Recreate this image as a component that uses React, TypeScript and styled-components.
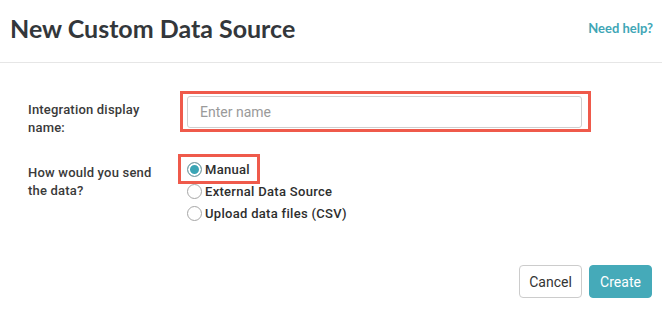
import React, { useState } from "react";
import styled, { createGlobalStyle } from "styled-components";

const GlobalStyle = createGlobalStyle`
  html, body {
    margin: 0;
    padding: 0;
    background: #ffffff;
  }
  * {
    box-sizing: border-box;
  }
`;

const Page = styled.div`
  width: 662px;
  height: 310px;
  background: #fff;
  font-family: Roboto, "Liberation Sans", sans-serif;
`;

const Header = styled.header`
  display: flex;
  align-items: center;
  justify-content: space-between;
  height: 63px;
  padding: 0 9px 6px 10px;
  border-bottom: 1px solid #e6e6e6;
`;

const Title = styled.h1`
  margin: 0;
  font-family: Lato, "Liberation Sans", sans-serif;
  font-weight: 700;
  font-size: 25px;
  color: #33373b;
`;

const HelpLink = styled.a`
  font-family: Lato, "Liberation Sans", sans-serif;
  font-weight: 700;
  font-size: 13px;
  color: #3fa6b6;
  text-decoration: none;
`;

const Body = styled.div`
  padding: 28px 0 0 28px;
`;

const FormRow = styled.div<{ $gap?: number }>`
  display: flex;
  align-items: flex-start;
  margin-bottom: ${(p) => p.$gap ?? 0}px;
`;

const Label = styled.label<{ $offset: number }>`
  width: 152px;
  flex-shrink: 0;
  margin-top: ${(p) => p.$offset}px;
  font-size: 13px;
  font-weight: 500;
  line-height: 18px;
  letter-spacing: 0.2px;
  color: #3a3a3a;
`;

const Highlight = styled.div`
  width: 411px;
  border: 3px solid #ef5a4b;
  padding: 2px 6px 1px 4px;
`;

const TextInput = styled.input`
  display: block;
  width: 100%;
  height: 32px;
  padding: 0 12px;
  border: 1px solid #cfcfcf;
  border-radius: 3px;
  font-family: Roboto, "Liberation Sans", sans-serif;
  font-size: 14px;
  color: #333;
  outline: none;

  &::placeholder {
    color: #9a9a9a;
  }
`;

const OptionList = styled.div`
  display: flex;
  flex-direction: column;
  align-items: flex-start;
  padding-left: 2px;
`;

const Option = styled.label<{ $marked?: boolean }>`
  display: inline-flex;
  align-items: center;
  gap: 3px;
  height: 22px;
  padding: 0 6px 0 5px;
  cursor: pointer;
  font-size: 13px;
  font-weight: 500;
  letter-spacing: 0.3px;
  color: #2e2e2e;
  outline: ${(p) => (p.$marked ? "3px solid #ef5a4b" : "none")};
  outline-offset: ${(p) => (p.$marked ? "1px" : "0")};
`;

const RadioDot = styled.span<{ $checked: boolean }>`
  width: 15px;
  height: 15px;
  border-radius: 50%;
  border: 1px solid ${(p) => (p.$checked ? "#8a9ea2" : "#a6a6a6")};
  background: ${(p) => (p.$checked ? "#3aa5b5" : "#fff")};
  box-shadow: inset 0 0 0 ${(p) => (p.$checked ? "2px" : "0")} #fff;
  flex-shrink: 0;
`;

const Footer = styled.div`
  display: flex;
  justify-content: flex-end;
  gap: 7px;
  padding: 41px 10px 0 0;
`;

const Button = styled.button<{ $primary?: boolean }>`
  width: 63px;
  height: 33px;
  padding: 0;
  border-radius: 4px;
  font-family: Roboto, "Liberation Sans", sans-serif;
  font-size: 14px;
  cursor: pointer;
  border: 1px solid ${(p) => (p.$primary ? "#45aab9" : "#cccccc")};
  background: ${(p) => (p.$primary ? "#45aab9" : "#fff")};
  color: ${(p) => (p.$primary ? "#fff" : "#333")};
`;

const options = ["Manual", "External Data Source", "Upload data files (CSV)"];

export default function App() {
  const [method, setMethod] = useState("Manual");

  return (
    <Page>
      <GlobalStyle />
      <Header>
        <Title>New Custom Data Source</Title>
        <HelpLink href="#">Need help?</HelpLink>
      </Header>
      <Body>
        <FormRow $gap={21}>
          <Label $offset={10}>
            Integration display
            <br />
            name:
          </Label>
          <Highlight>
            <TextInput placeholder="Enter name" />
          </Highlight>
        </FormRow>
        <FormRow>
          <Label $offset={6}>
            How would you send
            <br />
            the data?
          </Label>
          <OptionList>
            {options.map((o, i) => (
              <Option key={o} $marked={i === 0} onClick={() => setMethod(o)}>
                <RadioDot $checked={method === o} />
                {o}
              </Option>
            ))}
          </OptionList>
        </FormRow>
        <Footer>
          <Button>Cancel</Button>
          <Button $primary>Create</Button>
        </Footer>
      </Body>
    </Page>
  );
}
